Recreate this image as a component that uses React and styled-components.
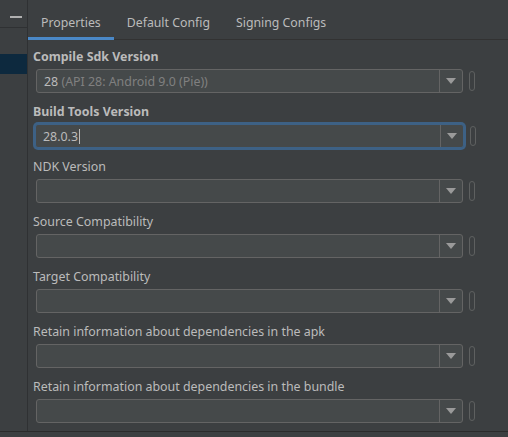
import styled, { createGlobalStyle } from "styled-components"

const GlobalStyle = createGlobalStyle`
    html, body {
        margin: 0;
        padding: 0;
        background: #3c3f41;
        font-family: "Noto Sans", "Open Sans", sans-serif;
        color: #bbbbbb;
    }
`

const fields = [
    { label: "Compile Sdk Version", bold: true, value: "28", hint: "(API 28: Android 9.0 (Pie))" },
    { label: "Build Tools Version", bold: true, value: "28.0.3", focused: true },
    { label: "NDK Version" },
    { label: "Source Compatibility" },
    { label: "Target Compatibility" },
    { label: "Retain information about dependencies in the apk" },
    { label: "Retain information about dependencies in the bundle" },
]

const tabs = ["Properties", "Default Config", "Signing Configs"]

function Combo({ field }){
    return(
        <ComboRow>
            <ComboBox focused={field.focused}>
                <ComboText>
                    {field.value && <span>{field.value}</span>}
                    {field.focused && <Caret />}
                    {field.hint && <Hint> {field.hint}</Hint>}
                </ComboText>
                <ArrowButton>
                    <svg width="10" height="6" viewBox="0 0 10 6"><path d="M0 0 H10 L5 6 Z" fill="#9a9a9a" /></svg>
                </ArrowButton>
            </ComboBox>
            <Pill />
        </ComboRow>
    )
}

export default function App(){
    return(
        <>
            <GlobalStyle />
            <Window>
                <Body>
                    <SidePanel>
                        <SideHeader><Minus /></SideHeader>
                        <SelectedRow />
                    </SidePanel>
                    <Main>
                        <TabBar>
                            {tabs.map((t, i) => <Tab key={t} active={i === 0}>{t}</Tab>)}
                        </TabBar>
                        <Content>
                            {fields.map(f => (
                                <Field key={f.label}>
                                    <Label bold={f.bold}>{f.label}</Label>
                                    <Combo field={f} />
                                </Field>
                            ))}
                        </Content>
                    </Main>
                </Body>
                <BottomStrip />
            </Window>
        </>
    )
}

const Window = styled.div`
    width: 508px;
    height: 437px;
    display: flex;
    flex-direction: column;
    overflow: hidden;
`

const Body = styled.div`
    flex: 1;
    display: flex;
    min-height: 0;
`

const SidePanel = styled.div`
    width: 27px;
    border-right: 1px solid #2f3133;
    display: flex;
    flex-direction: column;
`

const SideHeader = styled.div`
    height: 28px;
    box-sizing: border-box;
    border-bottom: 1px solid #2f3133;
    padding: 16px 0 0 10px;
`

const Minus = styled.div`
    width: 12px;
    height: 2px;
    background: #b0b0b0;
`

const SelectedRow = styled.div`
    margin-top: 26px;
    height: 20px;
    background: #0d293e;
`

const Main = styled.div`
    flex: 1;
    display: flex;
    flex-direction: column;
`

const TabBar = styled.div`
    height: 39px;
    display: flex;
    border-bottom: 1px solid #323232;
`

const Tab = styled.div`
    padding: 7px 13px 0;
    display: flex;
    align-items: center;
    box-sizing: border-box;
    font-size: 12.3px;
    color: #bbbbbb;
    border-bottom: 3px solid ${p => p.active ? "#4a88c7" : "transparent"};
    margin-bottom: -1px;
`

const Content = styled.div`
    flex: 1;
    padding: 7px 0 0 5px;
    display: flex;
    flex-direction: column;
    gap: 9px;
`

const Field = styled.div`
    display: flex;
    flex-direction: column;
    gap: 3px;
`

const Label = styled.div`
    height: 19px;
    line-height: 20px;
    font-size: 12.4px;
    font-weight: ${p => p.bold ? 700 : 400};
    color: #bbbbbb;
`

const ComboRow = styled.div`
    display: flex;
    align-items: center;
    gap: 6px;
`

const ComboBox = styled.div`
    width: 427px;
    height: 24px;
    margin-left: 3px;
    box-sizing: border-box;
    display: flex;
    background: #45494a;
    border: 1px solid #646464;
    border-radius: 3px;
    ${p => p.focused && `
        border-color: #3d6185;
        box-shadow: 0 0 0 2px #3d6185;
        margin-left: 2px;
        width: 429px;
    `}
`

const ComboText = styled.div`
    flex: 1;
    display: flex;
    align-items: center;
    padding-left: 7px;
    font-size: 12.4px;
    color: #bbbbbb;
    white-space: pre;
`

const Hint = styled.span`
    color: #808080;
`

const Caret = styled.span`
    width: 1px;
    height: 15px;
    background: #bbbbbb;
    margin-left: 1px;
`

const ArrowButton = styled.div`
    width: 22px;
    border-left: 1px solid #646464;
    display: flex;
    align-items: center;
    justify-content: center;
`

const Pill = styled.div`
    width: 4px;
    height: 18px;
    border: 1px solid #5e6060;
    border-radius: 3px;
`

const BottomStrip = styled.div`
    height: 5px;
    border-top: 1px solid #2b2b2b;
    background: #3c3f41;
`
